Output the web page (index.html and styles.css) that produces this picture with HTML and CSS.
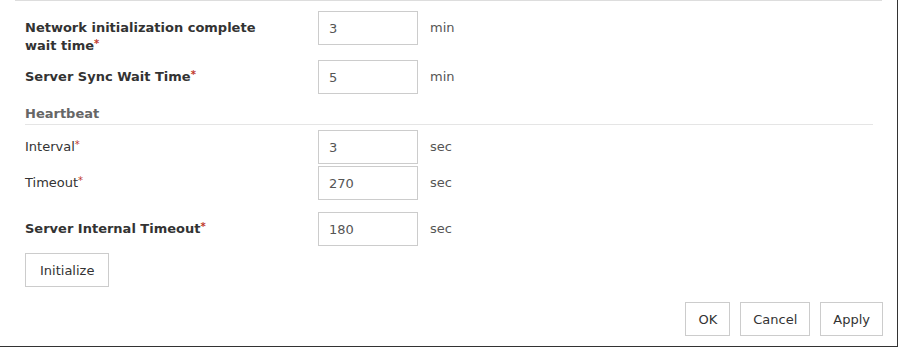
FILE: index.html
```html
<!DOCTYPE html>
<html lang="en">
<head>
    <meta charset="UTF-8">
    <title>Timeout Settings</title>
    <link rel="stylesheet" href="styles.css">
</head>
<body>
    <div class="dialog">
        <div class="top-rule"></div>

        <div class="form">
            <div class="row">
                <label class="label bold">Network initialization complete<br>wait time<span class="req">*</span></label>
                <input class="field" type="text" value="3">
                <span class="unit">min</span>
            </div>
            <div class="row gap-s">
                <label class="label bold">Server Sync Wait Time<span class="req">*</span></label>
                <input class="field" type="text" value="5">
                <span class="unit">min</span>
            </div>

            <div class="group-title">Heartbeat</div>

            <div class="row">
                <label class="label">Interval<span class="req">*</span></label>
                <input class="field" type="text" value="3">
                <span class="unit">sec</span>
            </div>
            <div class="row gap-xs">
                <label class="label">Timeout<span class="req">*</span></label>
                <input class="field" type="text" value="270">
                <span class="unit">sec</span>
            </div>
            <div class="row gap-m">
                <label class="label bold">Server Internal Timeout<span class="req">*</span></label>
                <input class="field" type="text" value="180">
                <span class="unit">sec</span>
            </div>

            <button class="btn init-btn">Initialize</button>
        </div>

        <div class="footer">
            <button class="btn">OK</button>
            <button class="btn">Cancel</button>
            <button class="btn">Apply</button>
        </div>
    </div>
</body>
</html>
```

FILE: styles.css
```css
body {
    margin: 0;
    background: #fff;
    color: #333;
    font-family: "DejaVu Sans", sans-serif;
    font-size: 13px;
}
.dialog {
    width: 897px;
    height: 346px;
    border-right: 1px solid #333;
    border-bottom: 1px solid #333;
}
.top-rule {
    height: 0;
    border-top: 1px solid #ddd;
    margin: 0 15px 0 15px;
}
.form {
    padding: 10px 24px 0 25px;
}
.row {
    display: flex;
    align-items: flex-start;
}
.gap-xs { margin-top: 2px; }
.gap-s { margin-top: 5px; }
.gap-m { margin-top: 12px; }
.label {
    width: 293px;
    line-height: 18px;
    padding-top: 8px;
}
.bold {
    font-weight: bold;
}
.req {
    color: #c0392b;
    font-size: 10px;
    vertical-align: top;
    position: relative;
    top: -2px;
}
.field {
    box-sizing: border-box;
    width: 100px;
    height: 34px;
    margin: 0;
    border: 1px solid #ccc;
    padding: 0 10px;
    font-family: inherit;
    font-size: 13px;
    color: #555;
    outline: none;
}
.unit {
    margin-left: 12px;
    line-height: 34px;
    color: #555;
}
.group-title {
    margin-top: 11px;
    padding-bottom: 1px;
    border-bottom: 1px solid #e5e5e5;
    color: #666;
    font-weight: bold;
    line-height: 18px;
    margin-bottom: 5px;
}
.btn {
    box-sizing: border-box;
    height: 34px;
    padding: 0 12px;
    border: 1px solid #ccc;
    background: #fff;
    color: #333;
    font-family: inherit;
    font-size: 13px;
}
.init-btn {
    display: block;
    margin-top: 7px;
    padding: 0 14px;
}
.footer {
    display: flex;
    justify-content: flex-end;
    gap: 10px;
    padding-right: 14px;
    margin-top: 15px;
}
```
